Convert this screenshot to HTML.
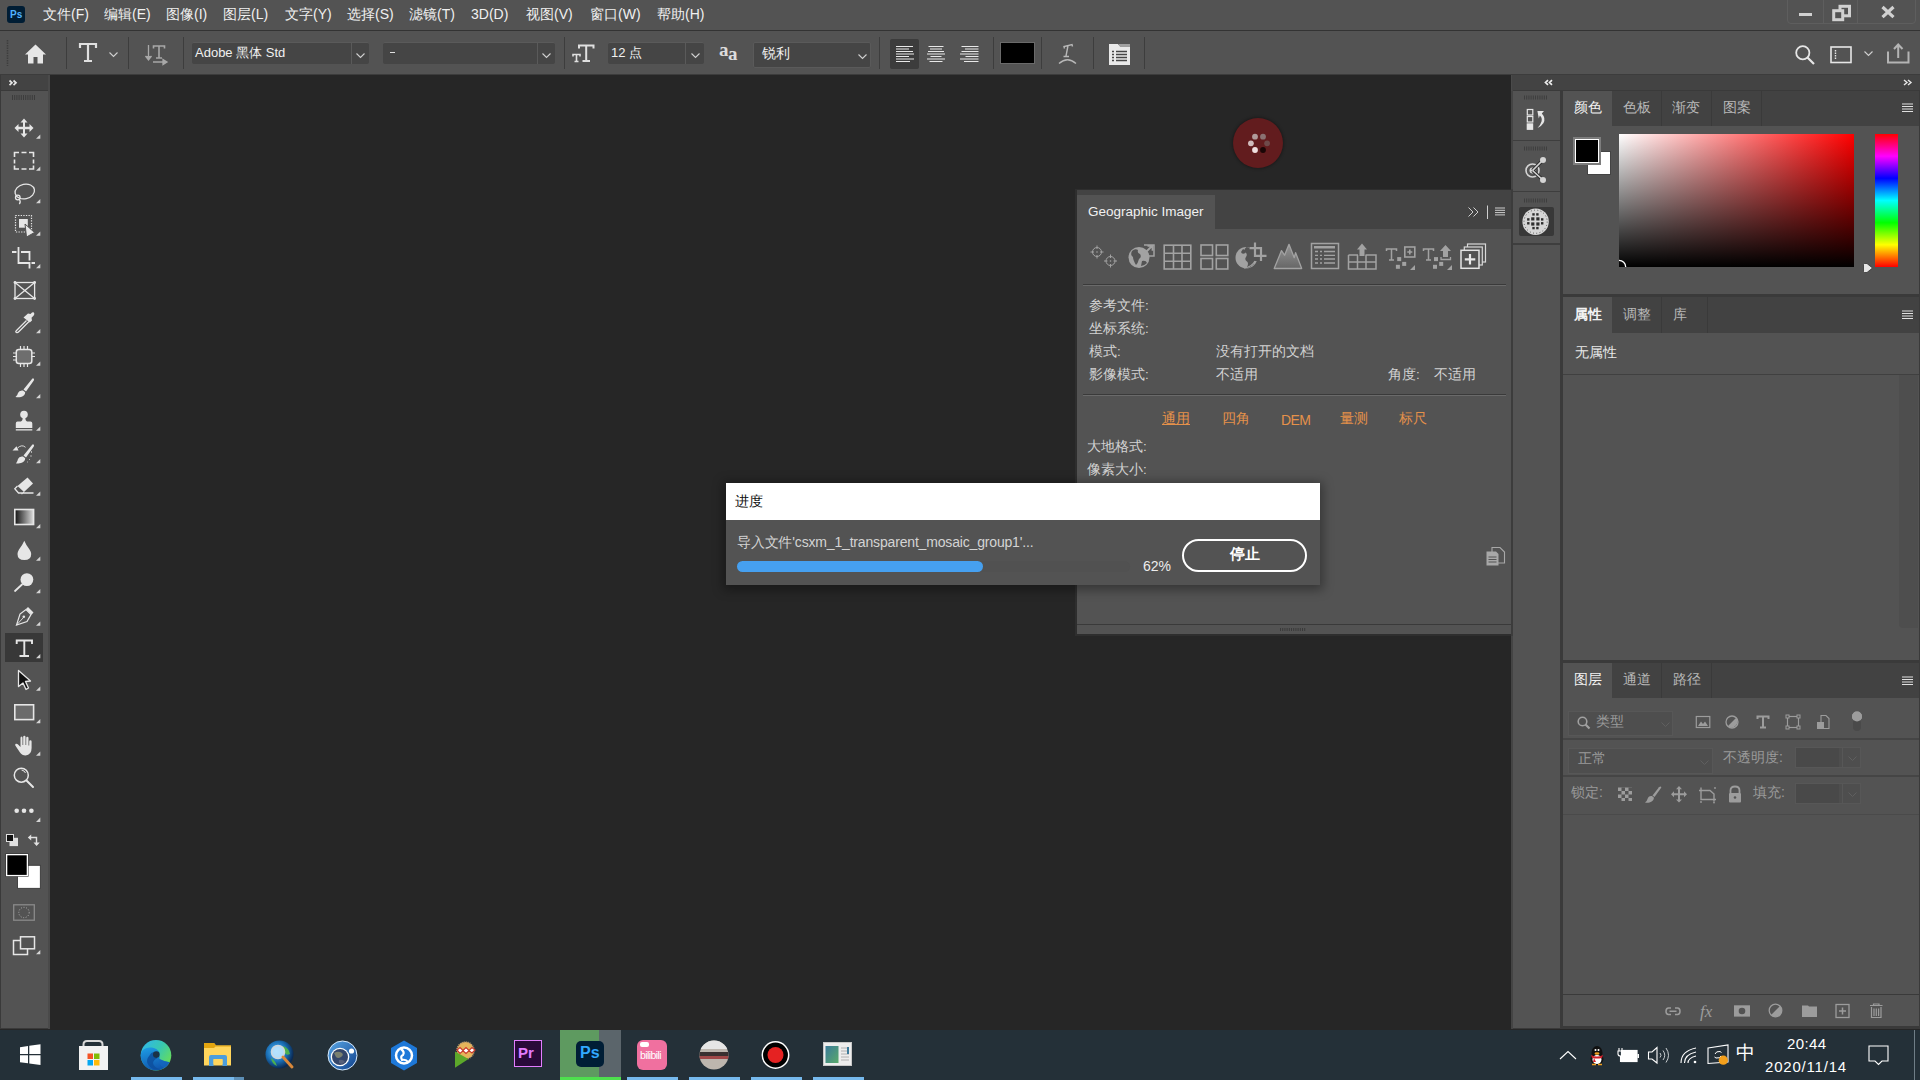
<!DOCTYPE html>
<html><head><meta charset="utf-8">
<style>
*{box-sizing:border-box;margin:0;padding:0}
html,body{width:1920px;height:1080px;overflow:hidden;background:#262626;font-family:"Liberation Sans",sans-serif;color:#e8e8e8}
.a{position:absolute}
svg{position:absolute;overflow:visible}
.t{position:absolute;white-space:nowrap;line-height:1}
</style></head><body>

<!-- MENU BAR -->
<div class="a" id="menubar" style="left:0;top:0;width:1920px;height:30px;background:#535353"></div>
<div class="a" style="left:0;top:30px;width:1920px;height:1px;background:#333"></div>
<div class="a" style="left:7px;top:6px;width:18px;height:17px;background:#001d34;border-radius:3px"></div>
<div class="t" style="left:10px;top:10px;font-size:10px;font-weight:bold;color:#50b2ff">Ps</div>
<div class="t" style="left:43px;top:7px;font-size:14px;color:#f0f0f0">文件(F)</div>
<div class="t" style="left:104px;top:7px;font-size:14px;color:#f0f0f0">编辑(E)</div>
<div class="t" style="left:166px;top:7px;font-size:14px;color:#f0f0f0">图像(I)</div>
<div class="t" style="left:223px;top:7px;font-size:14px;color:#f0f0f0">图层(L)</div>
<div class="t" style="left:285px;top:7px;font-size:14px;color:#f0f0f0">文字(Y)</div>
<div class="t" style="left:347px;top:7px;font-size:14px;color:#f0f0f0">选择(S)</div>
<div class="t" style="left:409px;top:7px;font-size:14px;color:#f0f0f0">滤镜(T)</div>
<div class="t" style="left:471px;top:7px;font-size:14px;color:#f0f0f0">3D(D)</div>
<div class="t" style="left:526px;top:7px;font-size:14px;color:#f0f0f0">视图(V)</div>
<div class="t" style="left:590px;top:7px;font-size:14px;color:#f0f0f0">窗口(W)</div>
<div class="t" style="left:657px;top:7px;font-size:14px;color:#f0f0f0">帮助(H)</div>
<!-- window controls -->
<div class="a" style="left:1787px;top:-4px;width:129px;height:28px;border:1px solid #5e5e5e;border-radius:4px"></div>
<div class="a" style="left:1823px;top:0;width:1px;height:23px;background:#5e5e5e"></div>
<div class="a" style="left:1857px;top:0;width:1px;height:23px;background:#5e5e5e"></div>
<div class="a" style="left:1799px;top:13px;width:13px;height:3.3px;background:#d0d0d0"></div>
<svg style="left:1830px;top:3px" width="24" height="20"><rect x="10" y="3.3" width="9.5" height="9.5" fill="none" stroke="#d0d0d0" stroke-width="3"/><rect x="3.7" y="7.7" width="9" height="9" fill="#535353" stroke="#d0d0d0" stroke-width="3"/></svg>
<svg style="left:1880px;top:5px" width="16" height="14"><path d="M2.5 2L13.5 12.2M13.5 2L2.5 12.2" stroke="#d0d0d0" stroke-width="3.2"/></svg>

<!-- OPTIONS BAR -->
<div class="a" id="optbar" style="left:0;top:31px;width:1920px;height:43px;background:#535353"></div>
<div class="a" style="left:0;top:74px;width:1920px;height:1px;background:#3c3c3c"></div>
<!-- grip -->
<svg style="left:6px;top:40px" width="3" height="26"><path d="M1.5 0V26" stroke="#3e3e3e" stroke-width="1.5" stroke-dasharray="1.5 1"/></svg>
<!-- separators -->
<div class="a" style="left:66px;top:37px;width:1px;height:32px;background:#3d3d3d"></div>
<div class="a" style="left:128px;top:37px;width:1px;height:32px;background:#3d3d3d"></div>
<div class="a" style="left:183px;top:37px;width:1px;height:32px;background:#3d3d3d"></div>
<div class="a" style="left:564px;top:37px;width:1px;height:32px;background:#3d3d3d"></div>
<div class="a" style="left:879px;top:37px;width:1px;height:32px;background:#3d3d3d"></div>
<div class="a" style="left:993px;top:37px;width:1px;height:32px;background:#3d3d3d"></div>
<div class="a" style="left:1041px;top:37px;width:1px;height:32px;background:#3d3d3d"></div>
<div class="a" style="left:1093px;top:37px;width:1px;height:32px;background:#3d3d3d"></div>
<div class="a" style="left:1144px;top:37px;width:1px;height:32px;background:#3d3d3d"></div>
<!-- home -->
<svg style="left:25px;top:44px" width="22" height="20"><path d="M10.5 0.5L21 10.5H18V19.5H12.5V13H8.5V19.5H3V10.5H0Z" fill="#e6e6e6"/></svg>
<!-- T tool -->
<svg style="left:79px;top:43px" width="18" height="20"><path d="M1 5V1H17V5M9 1V18M5 18H13" fill="none" stroke="#e0e0e0" stroke-width="2.2"/></svg>
<svg style="left:109px;top:52px" width="9" height="6"><path d="M0.5 0.5L4.5 4.5L8.5 0.5" fill="none" stroke="#d0d0d0" stroke-width="1.1"/></svg>
<!-- IT orient -->
<svg style="left:145px;top:45px" width="24" height="20"><path d="M3.5 0V14M0.5 11L3.5 15L6.5 11" fill="#a8a8a8" stroke="#a8a8a8" stroke-width="1.3"/><path d="M8.5 3.5V1H19.5V3.5M14 1V13M11 13H17" fill="none" stroke="#a8a8a8" stroke-width="1.6"/><path d="M8 17H21M18 14.5L22 17L18 19.5Z" fill="#a8a8a8" stroke="#a8a8a8" stroke-width="1.3"/></svg>
<!-- font family box -->
<div class="a" style="left:192px;top:42px;width:177px;height:22px;background:#454545;border-top:1px solid #5a5a5a;border-radius:2px"></div>
<div class="a" style="left:351px;top:43px;width:1px;height:21px;background:#5a5a5a"></div>
<div class="t" style="left:195px;top:46px;font-size:13px;color:#f0f0f0">Adobe 黑体 Std</div>
<svg style="left:356px;top:53px" width="9" height="6"><path d="M0.5 0.5L4.5 4.5L8.5 0.5" fill="none" stroke="#d0d0d0" stroke-width="1.1"/></svg>
<!-- font style box -->
<div class="a" style="left:383px;top:42px;width:172px;height:22px;background:#454545;border-top:1px solid #5a5a5a;border-radius:2px"></div>
<div class="a" style="left:537px;top:43px;width:1px;height:21px;background:#5a5a5a"></div>
<div class="a" style="left:390px;top:52px;width:5px;height:1px;background:#e0e0e0"></div>
<svg style="left:542px;top:53px" width="9" height="6"><path d="M0.5 0.5L4.5 4.5L8.5 0.5" fill="none" stroke="#d0d0d0" stroke-width="1.1"/></svg>
<!-- size icon -->
<svg style="left:572px;top:44px" width="24" height="20"><path d="M1 12.5V10.5H8V12.5M4.5 10.5V17.5M2.5 17.5H6.5" fill="none" stroke="#e0e0e0" stroke-width="1.6"/><path d="M7 4.5V1.5H21.5V4.5M14.2 1.5V17M10.5 17H18" fill="none" stroke="#e0e0e0" stroke-width="2"/></svg>
<!-- size box -->
<div class="a" style="left:608px;top:42px;width:96px;height:22px;background:#454545;border-top:1px solid #5a5a5a;border-radius:2px"></div>
<div class="a" style="left:685px;top:43px;width:1px;height:21px;background:#5a5a5a"></div>
<div class="t" style="left:611px;top:46px;font-size:13px;color:#f0f0f0">12 点</div>
<svg style="left:691px;top:53px" width="9" height="6"><path d="M0.5 0.5L4.5 4.5L8.5 0.5" fill="none" stroke="#d0d0d0" stroke-width="1.1"/></svg>
<!-- aa -->
<svg style="left:700px;top:36px" width="50" height="34"><text x="19" y="20.1" font-family="Liberation Serif" font-weight="bold" font-size="19" fill="#dcdcdc">a</text><text x="28" y="24.2" font-family="Liberation Serif" font-weight="bold" font-size="19" fill="#dcdcdc">a</text></svg>
<!-- antialias box -->
<div class="a" style="left:753px;top:42px;width:118px;height:26px;background:#454545;border:1px solid #5a5a5a;border-radius:2px"></div>
<div class="t" style="left:762px;top:46px;font-size:14px;color:#f0f0f0">锐利</div>
<svg style="left:858px;top:54px" width="9" height="6"><path d="M0.5 0.5L4.5 4.5L8.5 0.5" fill="none" stroke="#d0d0d0" stroke-width="1.1"/></svg>
<!-- align -->
<div class="a" style="left:890px;top:39px;width:29px;height:30px;background:#3c3c3c;border-radius:2px"></div>
<svg style="left:896px;top:45px" width="20" height="19"><path d="M0 1.5H17M0 4H13M0 6.5H17M0 9H18M0 11.5H13M0 14H18M0 16.5H14" stroke="#e8e8e8" stroke-width="1.2"/></svg>
<svg style="left:927px;top:45px" width="20" height="19"><path d="M1.5 1.5H16.5M3 4H15M1 6.5H17M0 9H18M3.5 11.5H14.5M0 14H18M2.5 16.5H15.5" stroke="#e8e8e8" stroke-width="1.2"/></svg>
<svg style="left:960px;top:45px" width="20" height="19"><path d="M1.5 1.5H18.5M5 4H18.5M1.5 6.5H18.5M0 9H18.5M5.5 11.5H18.5M0 14H18.5M4 16.5H18.5" stroke="#e8e8e8" stroke-width="1.2"/></svg>
<!-- color swatch -->
<div class="a" style="left:1000px;top:42px;width:35px;height:22px;background:#000;border:1px solid #6a6a6a"></div>
<!-- warp -->
<svg style="left:1058px;top:43px" width="19" height="22"><path d="M6.5 5.5L6 3.5L14 1.5L14.5 3.5M10 2.5L8 13M5.5 13.5H11" fill="none" stroke="#b8b8b8" stroke-width="1.4"/><path d="M1 20.5Q9.5 13 18 20.5" fill="none" stroke="#b8b8b8" stroke-width="1.4"/></svg>
<!-- panels icon -->
<svg style="left:1109px;top:44px" width="22" height="21"><path d="M0 0H9L11 2.5H21V21H0Z" fill="#e8e8e8"/><rect x="10" y="0" width="11" height="2" fill="#a0a0a0"/><path d="M3 7.5H5M7 7.5H18M3 10.5H5M7 10.5H18M3 13.5H5M7 13.5H18M3 16.5H5M7 16.5H18" stroke="#454545" stroke-width="1.3"/></svg>
<!-- right icons -->
<svg style="left:1795px;top:45px" width="21" height="20"><circle cx="7.8" cy="7.8" r="6.6" fill="none" stroke="#e6e6e6" stroke-width="1.8"/><path d="M12.5 12.5L19 19" stroke="#e6e6e6" stroke-width="2.2"/></svg>
<svg style="left:1830px;top:46px" width="22" height="18"><rect x="1" y="1" width="20" height="15.5" fill="none" stroke="#e6e6e6" stroke-width="1.6"/><path d="M5.5 4V13" stroke="#e6e6e6" stroke-width="1.4" stroke-dasharray="1.5 1"/></svg>
<svg style="left:1864px;top:51px" width="9" height="6"><path d="M0.5 0.5L4.5 4.5L8.5 0.5" fill="none" stroke="#d0d0d0" stroke-width="1.1"/></svg>
<svg style="left:1887px;top:43px" width="23" height="21"><path d="M1 8.5V19.5H21.5V8.5" fill="none" stroke="#b4b4b4" stroke-width="2"/><path d="M11.2 15V2M7 6L11.2 1.5L15.5 6" fill="none" stroke="#b4b4b4" stroke-width="2"/></svg>

<!-- TOOLBAR -->
<div class="a" style="left:0;top:75px;width:50px;height:954px;background:#3a3a3a"></div>
<div class="a" style="left:48px;top:75px;width:2px;height:954px;background:#4a4a4a"></div>
<div class="a" style="left:1px;top:75px;width:47px;height:15px;background:#434343"></div>
<div class="a" style="left:1px;top:91px;width:47px;height:937px;background:#535353"></div>
<svg style="left:0;top:0" width="50" height="1029" id="tools">
<g fill="none" stroke="#e6e6e6" stroke-width="1.6">
<!-- header >> -->
<path d="M9.5 80.5L12 82.8L9.5 85.1M13.5 80.5L16 82.8L13.5 85.1" stroke-width="1.7"/>
</g>
<!-- grip -->
<path d="M12 97.5H36" stroke="#3c3c3c" stroke-width="5" stroke-dasharray="1 1.2"/>
<!-- corner triangles -->
<g fill="#d4d4d4">
<path d="M40.3 134.5V138.8H36Z"/><path d="M40.3 166.5V170.8H36Z"/><path d="M40.3 199V203.3H36Z"/><path d="M40.3 231.5V235.8H36Z"/><path d="M40.3 264V268.3H36Z"/>
<path d="M40.3 329V333.3H36Z"/><path d="M40.3 361.5V365.8H36Z"/><path d="M40.3 394V398.3H36Z"/><path d="M40.3 426.5V430.8H36Z"/><path d="M40.3 459V463.3H36Z"/><path d="M40.3 491.5V495.8H36Z"/><path d="M40.3 524V528.3H36Z"/><path d="M40.3 556.5V560.8H36Z"/><path d="M40.3 589V593.3H36Z"/><path d="M40.3 621.5V625.8H36Z"/>
<path d="M40.3 654V658.3H36Z"/><path d="M40.3 686.5V690.8H36Z"/><path d="M40.3 719V723.3H36Z"/><path d="M40.3 751.5V755.8H36Z"/><path d="M40.3 817.5V822H36Z"/>
<path d="M40.3 950V954.3H36Z"/>
</g>
<!-- move -->
<g fill="#e6e6e6"><path d="M24 118.5L27.5 122.5H25V126.8H29.5V124L33.5 128L29.5 132V129.2H25V133.5H27.5L24 137.5L20.5 133.5H23V129.2H18.5V132L14.5 128L18.5 124V126.8H23V122.5H20.5Z"/></g>
<!-- marquee -->
<path d="M14.5 157V152.5H19M21.5 152.5H26.5M29 152.5H33.5V157M33.5 159.5V163.5M33.5 165.5V169H29M26.5 169H21.5M19 169H14.5V165.5M14.5 163.5V159.5" fill="none" stroke="#e6e6e6" stroke-width="1.6"/>
<!-- lasso -->
<g fill="none" stroke="#e6e6e6" stroke-width="1.3"><ellipse cx="24.8" cy="191.5" rx="9.8" ry="7.3" transform="rotate(-12 24.8 191.5)"/><circle cx="17.8" cy="197.5" r="2.3"/><path d="M19.5 199.5Q21 202 19.3 204"/></g>
<!-- quick select -->
<rect x="15.5" y="215.5" width="16" height="16.5" fill="none" stroke="#e6e6e6" stroke-width="1.2" stroke-dasharray="1.3 1.3"/>
<rect x="19" y="219" width="8.8" height="8.7" fill="#e6e6e6"/>
<path d="M25 224L34.5 232.5L26.5 237Z" fill="#e6e6e6" stroke="#535353" stroke-width="1"/>
<!-- crop -->
<path d="M12 252H16.5M18.5 247V263H29.5V268.5M21 252H29.5V260.5M31.5 263H35" fill="none" stroke="#e6e6e6" stroke-width="1.8"/>
<!-- frame -->
<g fill="none" stroke="#e6e6e6" stroke-width="1.3"><rect x="15" y="282.5" width="19.6" height="16"/><path d="M15 282.5L34.6 298.5M34.6 282.5L15 298.5"/></g>
<g fill="#e6e6e6"><circle cx="15" cy="282.5" r="1.4"/><circle cx="34.6" cy="282.5" r="1.4"/><circle cx="15" cy="298.5" r="1.4"/><circle cx="34.6" cy="298.5" r="1.4"/></g>
<!-- eyedropper -->
<path d="M26.5 320.5L16.5 330.5Q15 332 16.5 332.5Q17.5 333 19 331.5L29 321.5" fill="none" stroke="#e6e6e6" stroke-width="1.3"/>
<path d="M23.5 317.5L28 313.5L30.5 314L32 312.5Q34 311.8 34.3 313.5Q34.5 315 33 316.3L31.5 317.8L32 320.5L29.8 322.5Z" fill="#e6e6e6"/>
<!-- healing -->
<rect x="16.3" y="349.5" width="15.5" height="14" rx="2.5" fill="#6e6e6e" stroke="#e6e6e6" stroke-width="1.5"/>
<path d="M20.5 346V349.5M24 346V349.5M27.5 346V349.5M20.5 363.5V367M24 363.5V367M27.5 363.5V367M13 353H16.3M13 356.5H16.3M13 360H16.3M31.8 353H35M31.8 356.5H35" stroke="#e6e6e6" stroke-width="1.2"/>
<!-- brush -->
<path d="M33.5 378.5Q34.5 379 33.8 380.5L26 391.5L23.5 389.5L32 379Q32.8 378 33.5 378.5Z" fill="#e6e6e6"/>
<path d="M23 390.5L25.2 392.3Q25 396 21 397Q18 397.5 15.5 397Q17.5 395.5 18 393Q19 390 23 390.5Z" fill="#e6e6e6"/>
<!-- stamp -->
<circle cx="24" cy="414.5" r="3.8" fill="#e6e6e6"/>
<path d="M22.5 417H25.5Q25 420.5 27 421.5H30.5Q32.3 421.5 32.3 423.5V428H15.8V423.5Q15.8 421.5 17.5 421.5H21Q23 420.5 22.5 417Z" fill="#e6e6e6"/>
<rect x="15.8" y="429.2" width="16.5" height="1.3" fill="#e6e6e6"/>
<!-- history brush -->
<path d="M33.5 444.5Q34.5 445 33.8 446.5L26 457.5L23.5 455.5L32 445Q32.8 444 33.5 444.5Z" fill="#e6e6e6"/>
<path d="M23 456.5L25.2 458.3Q25 462 21 463Q18 463.5 16 463.5Q17.5 461.5 18 459Q19 456 23 456.5Z" fill="#e6e6e6"/>
<path d="M12.5 450.5L16.5 446.3L18.5 450.5Z" fill="#e6e6e6"/><path d="M17.5 448Q22 444 25.5 447.3" fill="none" stroke="#e6e6e6" stroke-width="0.9"/>
<path d="M31.5 451V453M31 455V457M29.5 459V460M27.5 461.5V462.5" stroke="#c8c8c8" stroke-width="0.8"/>
<!-- eraser -->
<path d="M27.5 477.5L33 483.5L24 492L17.5 486Z" fill="#e6e6e6"/>
<path d="M17.5 486L14.8 488.8L18.5 493H33.5M24 492L21.5 494" fill="none" stroke="#e6e6e6" stroke-width="1.3"/>
<!-- gradient -->
<defs><linearGradient id="gr"><stop offset="0" stop-color="#111"/><stop offset="1" stop-color="#ddd"/></linearGradient></defs>
<rect x="14.8" y="509.5" width="18.8" height="15" fill="url(#gr)" stroke="#e6e6e6" stroke-width="1.6"/>
<!-- blur drop -->
<path d="M24.3 540.8Q26 545 29.5 549.5Q31.2 552 31.2 554Q31.2 560 24.3 560Q17.5 560 17.5 554Q17.5 552 19 549.5Q22.5 545 24.3 540.8Z" fill="#e6e6e6"/>
<!-- dodge -->
<circle cx="26.9" cy="579.6" r="6.4" fill="#e6e6e6"/>
<path d="M22 584.5L15 591" stroke="#e6e6e6" stroke-width="1.8" stroke-linecap="round"/>
<!-- pen -->
<path d="M28 607L33.5 612.5L31.5 614.8L26 609Z" fill="#e6e6e6"/>
<path d="M26 609.5L31 614.5L27 621.5L16.5 625L20 614Z" fill="none" stroke="#e6e6e6" stroke-width="1.2"/>
<path d="M16.5 625L23.5 617.5" stroke="#e6e6e6" stroke-width="0.9"/><circle cx="23.8" cy="616.8" r="1.3" fill="#e6e6e6"/>
</svg>
<!-- T active -->
<div class="a" style="left:5px;top:633px;width:38px;height:29px;background:#383838"></div>
<svg style="left:0;top:0" width="50" height="1029">
<path d="M16.7 644V640.5H32V644M24.3 640.5V656M19.5 656H29" fill="none" stroke="#e6e6e6" stroke-width="1.9"/>
<path d="M40.3 654V658.3H36Z" fill="#d4d4d4"/>
<!-- path select -->
<path d="M18.5 670.5L30.5 681L25.5 681.5L28.5 688L26 689.5L23 683L18.5 686.5Z" fill="#111" stroke="#e6e6e6" stroke-width="1.3" stroke-linejoin="round"/>
<!-- rectangle -->
<rect x="14.8" y="704.8" width="18.8" height="14.8" fill="#6b6b6b" stroke="#e6e6e6" stroke-width="1.6"/>
<!-- hand -->
<path d="M20.5 738Q20.5 736.5 21.5 736.5Q22.5 736.5 22.5 738V745H23.2V737Q23.2 735.8 24.3 735.8Q25.5 735.8 25.5 737V745H26.2V738Q26.2 736.8 27.3 736.8Q28.5 736.8 28.5 738V745.5H29.2V741.5Q29.2 740.2 30.4 740.2Q31.6 740.2 31.6 741.5V748Q31.6 755 25.5 755.5Q22 755.5 20 752.5L15.3 745.5Q14.8 744.3 15.8 743.8Q16.8 743.3 17.8 744.3L20.5 747Z" fill="#e6e6e6"/>
<!-- zoom -->
<circle cx="21.3" cy="775.2" r="7" fill="none" stroke="#e6e6e6" stroke-width="1.5"/>
<path d="M21.5 770Q24.5 770.5 25.5 773" fill="none" stroke="#e6e6e6" stroke-width="1"/>
<path d="M26.5 780.5L33 787" stroke="#e6e6e6" stroke-width="2" stroke-linecap="round"/>
<!-- dots -->
<g fill="#e6e6e6"><circle cx="16.7" cy="810.8" r="2.3"/><circle cx="24" cy="810.8" r="2.3"/><circle cx="31.4" cy="810.8" r="2.3"/></g>
<!-- default colors -->
<rect x="9.5" y="837.8" width="8.5" height="8.3" fill="#e0e0e0"/>
<rect x="6.5" y="834.5" width="7" height="7" fill="#111" stroke="#e0e0e0" stroke-width="1"/>
<!-- swap -->
<path d="M31 837.5H36.5V843" fill="none" stroke="#e0e0e0" stroke-width="1.4"/>
<path d="M27.8 837.5L31.2 834.5V840.5Z M33.5 842.5H39.8L36.6 846Z" fill="#e0e0e0"/>
<!-- fg/bg -->
<rect x="17.6" y="865.3" width="22.7" height="23" fill="#fff" stroke="#2e2e2e" stroke-width="0.8"/>
<rect x="5.5" y="853.5" width="23" height="23.2" fill="#2e2e2e"/>
<rect x="6" y="854" width="22" height="22.2" fill="#fff"/>
<rect x="7.3" y="855.3" width="19.4" height="19.6" fill="#000"/>
<!-- quick mask -->
<rect x="13.7" y="904.8" width="20.6" height="15.4" fill="none" stroke="#8a8a8a" stroke-width="1.3"/>
<circle cx="24" cy="912.5" r="5.2" fill="none" stroke="#b0b0b0" stroke-width="1" stroke-dasharray="1 1.6"/>
<!-- screen mode -->
<rect x="13.5" y="940.5" width="14" height="14" fill="none" stroke="#e6e6e6" stroke-width="1.5"/>
<rect x="20.5" y="936.8" width="14" height="12" fill="#535353" stroke="#e6e6e6" stroke-width="1.5"/>
</svg>

<!-- RIGHT PANEL AREA -->
<div class="a" style="left:1511px;top:75px;width:409px;height:954px;background:#3a3a3a"></div>
<div class="a" style="left:1511px;top:75px;width:2px;height:954px;background:#444"></div>
<div class="a" style="left:1511px;top:75px;width:1px;height:16px;background:#4a4a4a"></div>
<div class="a" style="left:1512px;top:75px;width:408px;height:15px;background:#434343"></div>
<div class="a" style="left:1513px;top:91px;width:47px;height:937px;background:#535353"></div>
<div class="a" style="left:1563px;top:91px;width:356px;height:937px;background:#535353"></div>
<!-- strip groups borders -->
<div class="a" style="left:1513px;top:140px;width:47px;height:1px;background:#3e3e3e"></div>
<div class="a" style="left:1513px;top:191px;width:47px;height:1px;background:#3e3e3e"></div>
<div class="a" style="left:1513px;top:243px;width:47px;height:2px;background:#3e3e3e"></div>
<svg style="left:1508px;top:74px" width="60" height="180">
<path d="M40 6.2L37.5 8.5L40 10.8M44 6.2L41.5 8.5L44 10.8" fill="none" stroke="#ececec" stroke-width="1.7"/>
<path d="M16 23.5H40M16 74.5H40M16 126.5H40" stroke="#3e3e3e" stroke-width="4" stroke-dasharray="1 1.2"/>
<!-- history -->
<rect x="19.3" y="35.5" width="5.5" height="5.5" fill="none" stroke="#e6e6e6" stroke-width="1.2"/>
<rect x="19.3" y="42.5" width="5.5" height="5.5" fill="none" stroke="#e6e6e6" stroke-width="1.2"/>
<rect x="18.7" y="49.3" width="6.5" height="6.6" fill="#e6e6e6"/>
<path d="M29.4 37L36 37L33.8 39.5Q38 44 35.5 49Q33 53 29.5 54Q32.5 51 33.5 47.5Q34.5 43.5 31.8 41.5L30.8 44.5Z" fill="#e6e6e6"/>
<!-- icon2 -->
<circle cx="24.5" cy="96.5" r="6.5" fill="none" stroke="#d4d4d4" stroke-width="1.6"/>
<circle cx="24.5" cy="96.5" r="3" fill="#d4d4d4"/>
<path d="M24.5 96.5L35 86M24.5 96.5L35 106" stroke="#2e2e2e" stroke-width="3.5"/>
<path d="M24.5 96.5L35 86M24.5 96.5L35 106" stroke="#d4d4d4" stroke-width="1.6"/>
<circle cx="35" cy="86" r="3" fill="#d4d4d4"/><circle cx="35" cy="106" r="3" fill="#d4d4d4"/>
</svg>
<div class="a" style="left:1519px;top:207px;width:35px;height:29px;background:#383838;border-radius:2px"></div>
<svg style="left:1519px;top:207px" width="35" height="29">
<circle cx="16.6" cy="14.7" r="13.2" fill="#d6d6d6"/>
<circle cx="16.6" cy="14.7" r="11.6" fill="none" stroke="#4a4a4a" stroke-width="1" stroke-dasharray="0.9 2.4"/>
<g fill="#2e2e2e">
<rect x="12.2" y="10.3" width="3.2" height="3.2"/><rect x="17.3" y="10.3" width="3.2" height="3.2"/><rect x="12.2" y="15.4" width="3.2" height="3.2"/><rect x="17.3" y="15.4" width="3.2" height="3.2"/>
<rect x="13.3" y="6.2" width="2.4" height="2.4"/><rect x="17.2" y="6.2" width="2.4" height="2.4"/><rect x="8.1" y="11.2" width="2.4" height="2.4"/><rect x="22" y="11.2" width="2.4" height="2.4"/>
<rect x="8.1" y="15.1" width="2.4" height="2.4"/><rect x="22" y="15.1" width="2.4" height="2.4"/><rect x="13.3" y="19.9" width="2.4" height="2.4"/><rect x="17.2" y="19.9" width="2.4" height="2.4"/>
</g>
</svg>

<!-- COLOR PANEL -->
<div class="a" style="left:1563px;top:91px;width:356px;height:35px;background:#424242"></div>
<div class="a" style="left:1563px;top:91px;width:49px;height:35px;background:#535353"></div>
<div class="a" style="left:1661px;top:91px;width:1px;height:35px;background:#3a3a3a"></div>
<div class="a" style="left:1711px;top:91px;width:1px;height:35px;background:#3a3a3a"></div>
<div class="a" style="left:1761px;top:91px;width:1px;height:35px;background:#3a3a3a"></div>
<div class="t" style="left:1574px;top:100px;font-size:14px;color:#f2f2f2">颜色</div>
<div class="t" style="left:1623px;top:100px;font-size:14px;color:#b8b8b8">色板</div>
<div class="t" style="left:1672px;top:100px;font-size:14px;color:#b8b8b8">渐变</div>
<div class="t" style="left:1723px;top:100px;font-size:14px;color:#b8b8b8">图案</div>
<svg style="left:1902px;top:103px" width="12" height="10"><path d="M0 1H11M0 3.5H11M0 6H11M0 8.5H11" stroke="#e0e0e0" stroke-width="1"/></svg>
<!-- swatches -->
<div class="a" style="left:1587px;top:151px;width:24px;height:24px;background:#fff;border:1px solid #444"></div>
<div class="a" style="left:1573px;top:137px;width:28px;height:28px;background:#000;border:2px solid #7d7d7d;box-shadow:inset 0 0 0 1px #fff, inset 0 0 0 2px #000"></div>
<!-- color field -->
<div class="a" style="left:1619px;top:134px;width:235px;height:133px;background:linear-gradient(to bottom,rgba(0,0,0,0),#000),linear-gradient(to right,#fff,#f00)"></div>
<svg style="left:1612px;top:255px" width="20" height="14"><path d="M7 5.3A6.7 6.7 0 0 1 13.7 12" fill="none" stroke="#fff" stroke-width="1.3"/></svg>
<!-- hue -->
<div class="a" style="left:1875px;top:134px;width:23px;height:133px;background:linear-gradient(to bottom,#f00 0%,#f0f 16.7%,#00f 33.3%,#0ff 50%,#0f0 66.7%,#ff0 83.3%,#f00 100%)"></div>
<svg style="left:1862px;top:262px" width="12" height="12"><path d="M2.5 1.5H5L10.5 6L5 10.5H2.5Q1.5 10.5 1.5 9.5V2.5Q1.5 1.5 2.5 1.5Z" fill="#e6e6e6" stroke="#333" stroke-width="0.8" stroke-linejoin="round"/></svg>
<div class="a" style="left:1563px;top:294px;width:356px;height:3px;background:#3a3a3a"></div>

<!-- PROPERTIES PANEL -->
<div class="a" style="left:1563px;top:297px;width:356px;height:36px;background:#424242"></div>
<div class="a" style="left:1563px;top:297px;width:49px;height:36px;background:#535353"></div>
<div class="a" style="left:1661px;top:297px;width:1px;height:36px;background:#3a3a3a"></div>
<div class="a" style="left:1707px;top:297px;width:1px;height:36px;background:#3a3a3a"></div>
<div class="t" style="left:1574px;top:307px;font-size:14px;color:#f2f2f2;font-weight:bold">属性</div>
<div class="t" style="left:1623px;top:307px;font-size:14px;color:#b8b8b8">调整</div>
<div class="t" style="left:1673px;top:307px;font-size:14px;color:#b8b8b8">库</div>
<svg style="left:1902px;top:310px" width="12" height="10"><path d="M0 1H11M0 3.5H11M0 6H11M0 8.5H11" stroke="#e0e0e0" stroke-width="1"/></svg>
<div class="t" style="left:1575px;top:345px;font-size:14px;color:#e8e8e8">无属性</div>
<div class="a" style="left:1563px;top:374px;width:356px;height:1px;background:#404040"></div>
<div class="a" style="left:1899px;top:375px;width:19px;height:253px;background:#4e4e4e;border-radius:0 0 0 4px"></div>
<div class="a" style="left:1563px;top:660px;width:356px;height:3px;background:#3a3a3a"></div>

<!-- LAYERS PANEL -->
<div class="a" style="left:1563px;top:663px;width:356px;height:35px;background:#424242"></div>
<div class="a" style="left:1563px;top:663px;width:49px;height:35px;background:#535353"></div>
<div class="a" style="left:1661px;top:663px;width:1px;height:35px;background:#3a3a3a"></div>
<div class="a" style="left:1711px;top:663px;width:1px;height:35px;background:#3a3a3a"></div>
<div class="t" style="left:1574px;top:672px;font-size:14px;color:#f2f2f2">图层</div>
<div class="t" style="left:1623px;top:672px;font-size:14px;color:#b8b8b8">通道</div>
<div class="t" style="left:1673px;top:672px;font-size:14px;color:#b8b8b8">路径</div>
<svg style="left:1902px;top:676px" width="12" height="10"><path d="M0 1H11M0 3.5H11M0 6H11M0 8.5H11" stroke="#e0e0e0" stroke-width="1"/></svg>
<!-- filter row -->
<div class="a" style="left:1568px;top:711px;width:105px;height:25px;background:#4e4e4e;border:1px solid #575757"></div>
<svg style="left:1577px;top:716px" width="14" height="14"><circle cx="5.5" cy="5.5" r="4.3" fill="none" stroke="#a0a0a0" stroke-width="1.6"/><path d="M8.5 8.5L12.5 12.5" stroke="#a0a0a0" stroke-width="2.2"/></svg>
<div class="t" style="left:1596px;top:714px;font-size:14px;color:#9a9a9a">类型</div>
<svg style="left:1661px;top:722px" width="9" height="6"><path d="M0.5 0.5L4.5 4.5L8.5 0.5" fill="none" stroke="#5f5f5f" stroke-width="1"/></svg>
<svg style="left:1690px;top:712px" width="180" height="22" fill="#9c9c9c">
<rect x="6.3" y="4.5" width="13.5" height="11" fill="none" stroke="#9c9c9c" stroke-width="1.2"/><path d="M8 14L11 9.5L13 12L15 9.5L18 14Z"/>
<circle cx="42" cy="10" r="6" fill="none" stroke="#9c9c9c" stroke-width="1.3"/><path d="M46.2 5.8A6 6 0 0 1 37.8 14.2Z"/>
<path d="M67.5 7V4.5H78.5V7M73 4.5V15.5M70 15.5H76" fill="none" stroke="#9c9c9c" stroke-width="2"/>
<rect x="97.5" y="4.5" width="11" height="11" fill="none" stroke="#9c9c9c" stroke-width="1.2"/><rect x="96" y="3" width="3" height="3" fill="#535353" stroke="#9c9c9c" stroke-width="1"/><rect x="107" y="3" width="3" height="3" fill="#535353" stroke="#9c9c9c" stroke-width="1"/><rect x="96" y="14" width="3" height="3" fill="#535353" stroke="#9c9c9c" stroke-width="1"/><rect x="107" y="14" width="3" height="3" fill="#535353" stroke="#9c9c9c" stroke-width="1"/>
<path d="M131 3.5H136L139 6.5V16.5H131Z" fill="none" stroke="#9c9c9c" stroke-width="1.1"/><rect x="127" y="10" width="7" height="7"/>
<circle cx="167" cy="4.5" r="5"/><rect x="163" y="7" width="8" height="12" rx="4" fill="#4a4a4a"/><circle cx="167" cy="4.5" r="5"/>
</svg>
<div class="a" style="left:1563px;top:738px;width:356px;height:2px;background:#454545"></div>
<!-- blend row -->
<div class="a" style="left:1568px;top:748px;width:145px;height:26px;background:#4e4e4e;border:1px solid #575757"></div>
<div class="t" style="left:1578px;top:751px;font-size:14px;color:#9a9a9a">正常</div>
<svg style="left:1700px;top:760px" width="9" height="6"><path d="M0.5 0.5L4.5 4.5L8.5 0.5" fill="none" stroke="#5f5f5f" stroke-width="1"/></svg>
<div class="t" style="left:1723px;top:750px;font-size:14px;color:#9a9a9a">不透明度:</div>
<div class="a" style="left:1795px;top:747px;width:66px;height:21px;background:#4e4e4e;border:1px solid #575757"></div>
<div class="a" style="left:1796px;top:748px;width:43px;height:19px;background:#494949"></div>
<div class="a" style="left:1842px;top:748px;width:1px;height:19px;background:#575757"></div>
<svg style="left:1848px;top:756px" width="9" height="6"><path d="M0.5 0.5L4.5 4.5L8.5 0.5" fill="none" stroke="#5f5f5f" stroke-width="1"/></svg>
<div class="a" style="left:1563px;top:775px;width:356px;height:2px;background:#454545"></div>
<!-- lock row -->
<div class="t" style="left:1571px;top:785px;font-size:14px;color:#9a9a9a">锁定:</div>
<svg style="left:1615px;top:784px" width="135" height="22" fill="#9c9c9c">
<rect x="3" y="3.5" width="14" height="13.5"/><path d="M6.5 3.5H10V7H6.5ZM13.5 3.5H17V7H13.5ZM3 7H6.5V10.5H3ZM10 7H13.5V10.5H10ZM6.5 10.5H10V14H6.5ZM13.5 10.5H17V14H13.5ZM3 14H6.5V17H3ZM10 14H13.5V17H10Z" fill="#535353"/>
<path d="M45.5 2.5Q47 2.5 46 4L39.5 13L37.5 11.5L44 3.2Q44.7 2.5 45.5 2.5Z"/><path d="M37 12L39 13.8Q38.5 17.5 34.5 18.5Q32 19 30 18.5Q32 17 32.5 15Q33.5 11.5 37 12Z"/>
<path d="M64 2L67 5.2H65V9.3H69V7.3L72 10.3L69 13.3V11.3H65V15.4H67L64 18.6L61 15.4H63V11.3H59V13.3L56 10.3L59 7.3V9.3H63V5.2H61Z"/>
<path d="M86 3.5V15.5H101M84 6.5H95L99 10V17.5" fill="none" stroke="#9c9c9c" stroke-width="1.4"/><circle cx="100" cy="4" r="0.9"/><circle cx="86" cy="18" r="0.9"/><circle cx="99" cy="18.5" r="0.9"/>
<path d="M115.5 9V6.5Q115.5 2.5 120 2.5Q124.5 2.5 124.5 6.5V9" fill="none" stroke="#9c9c9c" stroke-width="1.8"/><rect x="114" y="9" width="12" height="9.5" rx="1"/><circle cx="120" cy="13.5" r="1.3" fill="#535353"/>
</svg>
<div class="t" style="left:1753px;top:785px;font-size:14px;color:#9a9a9a">填充:</div>
<div class="a" style="left:1795px;top:783px;width:66px;height:21px;background:#4e4e4e;border:1px solid #575757"></div>
<div class="a" style="left:1796px;top:784px;width:43px;height:19px;background:#494949"></div>
<div class="a" style="left:1842px;top:784px;width:1px;height:19px;background:#575757"></div>
<svg style="left:1848px;top:792px" width="9" height="6"><path d="M0.5 0.5L4.5 4.5L8.5 0.5" fill="none" stroke="#5f5f5f" stroke-width="1"/></svg>
<div class="a" style="left:1563px;top:814px;width:356px;height:1px;background:#4a4a4a"></div>
<!-- footer -->
<div class="a" style="left:1563px;top:994px;width:356px;height:1px;background:#3a3a3a"></div>
<svg style="left:1660px;top:1000px" width="230" height="22" fill="#9c9c9c">
<path d="M11 8H8.5Q6 8 6 11.3Q6 14.5 8.5 14.5H11M15 8H17.5Q20 8 20 11.3Q20 14.5 17.5 14.5H15M9.5 11.3H16.5" fill="none" stroke="#9c9c9c" stroke-width="1.5"/>
<text x="40" y="17" font-family="Liberation Serif" font-style="italic" font-size="17">fx</text>
<rect x="74" y="5.3" width="16" height="11.3"/><circle cx="82" cy="11" r="3.3" fill="#535353"/>
<circle cx="115.5" cy="10.5" r="6.3" fill="none" stroke="#9c9c9c" stroke-width="1.3"/><path d="M120 6A6.3 6.3 0 0 1 111 15Z"/>
<path d="M142 5.5H148L149 6.5H157V17H142Z"/>
<rect x="176" y="4.5" width="13" height="13" fill="none" stroke="#9c9c9c" stroke-width="1.3"/><path d="M182.5 7.5V14.5M179 11H186" stroke="#9c9c9c" stroke-width="1.5"/>
<path d="M210 5.5H222.5M213.5 5.5V4H219V5.5M211.5 7V17.5H221V7M214 8.5V16M216.3 8.5V16M218.6 8.5V16" fill="none" stroke="#9c9c9c" stroke-width="1.2"/>
</svg>
<div class="a" style="left:1563px;top:1026px;width:356px;height:3px;background:#3a3a3a"></div>

<svg style="left:1900px;top:76px" width="16" height="14"><path d="M4 4L7 6.5L4 9M8 4L11 6.5L8 9" fill="none" stroke="#e6e6e6" stroke-width="1.4"/></svg>

<!-- SPINNER -->
<div class="a" style="left:1233px;top:118px;width:50px;height:50px;border-radius:50%;background:#621c1e;box-shadow:0 0 3px 1px rgba(0,0,0,0.3)"></div>
<svg style="left:1233px;top:118px" width="50" height="50">
<circle cx="22" cy="18.7" r="2.9" fill="#b09a9a"/><circle cx="30" cy="18.7" r="2.9" fill="#8a7272"/>
<circle cx="17.9" cy="25.3" r="2.9" fill="#d0bcbc"/><circle cx="34.1" cy="25.3" r="2.9" fill="#6e4a4a"/>
<circle cx="22" cy="32" r="2.9" fill="#f0e0e0"/><circle cx="30" cy="32" r="2.9" fill="#1a0606"/>
</svg>

<!-- GEOGRAPHIC IMAGER PANEL -->
<div class="a" style="left:1511px;top:189px;width:2px;height:447px;background:#3c3c3c"></div>
<div class="a" style="left:1075px;top:189px;width:436px;height:447px;background:#2e2e2e"></div>
<div class="a" style="left:1077px;top:190px;width:434px;height:39px;background:#434343"></div>
<div class="a" style="left:1077px;top:195px;width:138px;height:34px;background:#535353"></div>
<div class="a" style="left:1077px;top:229px;width:434px;height:396px;background:#535353"></div>
<div class="t" style="left:1088px;top:205px;font-size:13.5px;color:#f0f0f0">Geographic Imager</div>
<svg style="left:1466px;top:204px" width="42" height="16"><path d="M2.5 3.5L7 8L2.5 12.5M7.5 3.5L12 8L7.5 12.5" fill="none" stroke="#cfcfcf" stroke-width="1"/><path d="M21.5 1.5V15" stroke="#cfcfcf" stroke-width="1"/><path d="M29 4H39M29 6.3H39M29 8.6H39M29 10.9H39" stroke="#cfcfcf" stroke-width="1"/></svg>
<!-- GI icons -->
<svg style="left:1080px;top:238px" width="420" height="36" fill="#a2a2a2" stroke="#a2a2a2">
<g fill="none" stroke-width="1"><circle cx="17" cy="14" r="4.5"/><path d="M17 7.5V11M17 17V20.5M10.5 14H14M20 14H23.5"/><circle cx="30.5" cy="23" r="4.5"/><path d="M30.5 16.5V20M30.5 26V29.5M24 23H27.5M33.5 23H37"/></g>
<circle cx="17" cy="14" r="0.8" stroke="none"/><circle cx="30.5" cy="23" r="0.8" stroke="none"/>
<!-- globe arrow -->
<circle cx="59" cy="19.5" r="10.5" stroke="none"/>
<path d="M52 13Q55 10 58 12Q57 15 60 16Q62 19 59 21Q58 25 56 27Q53 22 53 19Q50 17 52 13ZM62 23Q66 22 67 25Q64 28 61 28Z" fill="#535353" stroke="none"/>
<path d="M64 7H74V18H69" fill="none" stroke-width="1.5"/><path d="M63 17L72 8M67.5 7.8H72.5V12.8" fill="none" stroke-width="1.8"/>
<!-- grid 3x3 -->
<g fill="none" stroke-width="1.6"><rect x="84.2" y="7.2" width="26.6" height="23.8"/><path d="M93.5 7.2V31M102 7.2V31M84.2 15.2H110.8M84.2 23.2H110.8"/></g>
<!-- grid 2x2 -->
<g fill="none" stroke-width="1.6"><rect x="121" y="7" width="11.5" height="10.5"/><rect x="136.3" y="7" width="11.5" height="10.5"/><rect x="121" y="20.5" width="11.5" height="10.5"/><rect x="136.3" y="20.5" width="11.5" height="10.5"/></g>
<!-- globe crop -->
<circle cx="166.3" cy="19.7" r="10.8" stroke="none"/>
<path d="M166.5 9Q171 9.5 174 12V26Q171 29.5 166 30.5Q169 27 167.5 24Q164 22 166 19Q168 16 165 14Q163 12 166.5 9Z" fill="#535353" stroke="none"/>
<path d="M163 11Q166 12 165.5 15Q162 17 161 14Z" fill="#535353" stroke="none"/>
<rect x="169" y="4" width="16" height="19" fill="#535353" stroke="none"/>
<path d="M175 4.5V17.8H186.5M169.5 10.1H181V23" fill="none" stroke-width="2.2"/>
<path d="M164 30Q172 29 175 23" fill="none" stroke-width="1.2"/>
<!-- mountain -->
<defs><linearGradient id="mtg" x1="0" y1="0" x2="0" y2="1"><stop offset="0" stop-color="#959595"/><stop offset="1" stop-color="#666"/></linearGradient></defs>
<path d="M194.2 30.5L201.5 12.6L204.6 17.2L209 6.3L214.2 19.7L215.6 14.7L221.7 30.5Z" fill="url(#mtg)" stroke="#a2a2a2" stroke-width="1.3" stroke-linejoin="round"/>
<!-- table -->
<g fill="none" stroke-width="1.5"><rect x="231.5" y="5.5" width="27" height="25"/></g>
<path d="M235 13.5H238M240 13.5H242M244 13.5H255M235 17.3H238M240 17.3H242M244 17.3H255M235 21H238M240 21H242M244 21H255M235 25H238M240 25H242M244 25H255" stroke-width="1.3"/>
<rect x="234" y="8" width="21" height="2.5" stroke="none"/>
<!-- house grid -->
<g fill="none" stroke-width="1.5"><path d="M268.5 17V31H296V17H285.5M268.5 17H278M268.5 24H296M277.5 17V31M286 17V31"/></g>
<path d="M282 5.5L287 11.5H284.5V18H279.5V11.5H277Z" stroke="none"/>
<!-- T dots plus -->
<path d="M306.5 13V11H316.5V13M311.5 11V22M309 22H314" fill="none" stroke-width="1.5"/>
<rect x="317.2" y="19.1" width="4" height="4" stroke="none"/><rect x="322.2" y="23.9" width="4" height="4" stroke="none"/><rect x="315.9" y="26.8" width="4" height="4" stroke="none"/>
<rect x="324.8" y="9" width="10" height="10" fill="none" stroke-width="1.6"/><path d="M329.8 11.5V16.5M327.3 14H332.3" stroke-width="1.6"/>
<path d="M335 27V32H330Z" stroke="none"/>
<!-- T dots arrow -->
<path d="M343.5 13V11H353.5V13M348.5 11V22M346 22H351" fill="none" stroke-width="1.5"/>
<rect x="354" y="19.1" width="4" height="4" stroke="none"/><rect x="359.2" y="23.9" width="4" height="4" stroke="none"/><rect x="353" y="26.8" width="4" height="4" stroke="none"/>
<path d="M365.5 7L371 13H368V19H363V13H360Z" stroke="none"/><path d="M361 19V21.5H370.5V19" fill="none" stroke-width="1.3"/>
<path d="M372 27V32H367Z" stroke="none"/>
</svg>
<svg style="left:1460px;top:243px" width="28" height="28">
<rect x="7.5" y="1" width="18" height="18" fill="none" stroke="#d8d8d8" stroke-width="1.2"/>
<rect x="4.3" y="4" width="18" height="18" fill="#535353" stroke="#d8d8d8" stroke-width="1.2"/>
<rect x="1" y="7.3" width="18" height="18" fill="#535353" stroke="#e4e4e4" stroke-width="1.5"/>
<path d="M10 11V21.5M4.8 16.3H15.3" stroke="#e8e8e8" stroke-width="2.2"/>
</svg>
<div class="a" style="left:1083px;top:284px;width:423px;height:1px;background:#3a3a3a"></div>
<div class="a" style="left:1083px;top:285px;width:423px;height:1px;background:#6a6a6a"></div>
<div class="t" style="left:1089px;top:299px;font-size:13.5px;color:#d2d2d2">参考文件:</div>
<div class="t" style="left:1089px;top:322px;font-size:13.5px;color:#d2d2d2">坐标系统:</div>
<div class="t" style="left:1089px;top:345px;font-size:13.5px;color:#d2d2d2">模式:</div>
<div class="t" style="left:1089px;top:368px;font-size:13.5px;color:#d2d2d2">影像模式:</div>
<div class="t" style="left:1216px;top:345px;font-size:13.5px;color:#d2d2d2">没有打开的文档</div>
<div class="t" style="left:1216px;top:368px;font-size:13.5px;color:#d2d2d2">不适用</div>
<div class="t" style="left:1388px;top:368px;font-size:13.5px;color:#d2d2d2">角度:</div>
<div class="t" style="left:1434px;top:368px;font-size:13.5px;color:#d2d2d2">不适用</div>
<div class="a" style="left:1083px;top:394px;width:423px;height:1px;background:#3a3a3a"></div>
<div class="a" style="left:1083px;top:395px;width:423px;height:1px;background:#6a6a6a"></div>
<div class="t" style="left:1162px;top:412px;font-size:13.5px;color:#e5914a;text-decoration:underline">通用</div>
<div class="t" style="left:1222px;top:412px;font-size:13.5px;color:#e5914a">四角</div>
<div class="t" style="left:1281px;top:413px;font-size:14px;color:#e5914a;letter-spacing:-0.6px">DEM</div>
<div class="t" style="left:1340px;top:412px;font-size:13.5px;color:#e5914a">量测</div>
<div class="t" style="left:1399px;top:412px;font-size:13.5px;color:#e5914a">标尺</div>
<div class="t" style="left:1087px;top:440px;font-size:13.5px;color:#d2d2d2">大地格式:</div>
<div class="t" style="left:1087px;top:463px;font-size:13.5px;color:#d2d2d2">像素大小:</div>
<svg style="left:1485px;top:546px" width="22" height="22"><path d="M7 1.5H15L19.5 6V17H7Z" fill="#535353" stroke="#a8a8a8" stroke-width="1.1"/><path d="M1.5 5.5H11L13.5 8V19.5H1.5Z" fill="#a8a8a8"/><path d="M3.5 11H11.5M3.5 13.5H11.5M3.5 16H11.5" stroke="#535353" stroke-width="1"/></svg>
<div class="a" style="left:1077px;top:624px;width:434px;height:1px;background:#3a3a3a"></div>
<div class="a" style="left:1077px;top:625px;width:434px;height:9px;background:#535353"></div>
<svg style="left:1280px;top:627px" width="26" height="5"><path d="M0 2.5H26" stroke="#3a3a3a" stroke-width="3" stroke-dasharray="1 1.2"/></svg>

<!-- PROGRESS DIALOG -->
<div class="a" style="left:726px;top:483px;width:594px;height:102px;background:#535353;box-shadow:0 2px 10px 3px rgba(0,0,0,0.35)"></div>
<div class="a" style="left:726px;top:483px;width:594px;height:37px;background:#fff"></div>
<div class="t" style="left:735px;top:494px;font-size:14px;color:#111">进度</div>
<div class="t" style="left:737px;top:535px;font-size:14px;color:#d4d4d4;letter-spacing:-0.17px">导入文件'csxm_1_transparent_mosaic_group1'...</div>
<div class="a" style="left:737px;top:561px;width:393px;height:11px;background:#515151;border-radius:6px"></div>
<div class="a" style="left:737px;top:561px;width:246px;height:11px;background:#46a0f0;border-radius:6px"></div>
<div class="t" style="left:1143px;top:559px;font-size:14px;color:#ececec">62%</div>
<div class="a" style="left:1182px;top:539px;width:125px;height:33px;border:2.3px solid #fff;border-radius:17px"></div>
<div class="t" style="left:1230px;top:547px;font-size:14.5px;color:#fff;font-weight:bold">停止</div>

<!-- TASKBAR -->
<div class="a" id="taskbar" style="left:0;top:1030px;width:1920px;height:50px;background:#243038"></div>
<!-- windows logo -->
<svg style="left:19px;top:1044px" width="23" height="22"><path d="M1 3.2L9 2V10H1ZM10.3 1.8L21.5 0.3V10H10.3ZM1 11.3H9V19.3L1 18.2ZM10.3 11.3H21.5V21L10.3 19.5Z" fill="#fff"/></svg>
<!-- store -->
<svg style="left:78px;top:1040px" width="31" height="31"><path d="M5.5 6V4.5Q5.5 1 9 1H21Q24.5 1 24.5 4.5V6" fill="none" stroke="#d8d8d8" stroke-width="2"/><path d="M1 6H30V30H1Z" fill="#f2f2f2"/><rect x="9.5" y="13.5" width="5.5" height="5.5" fill="#f35325"/><rect x="16" y="13.5" width="5.5" height="5.5" fill="#81bc06"/><rect x="9.5" y="20" width="5.5" height="5.5" fill="#05a6f0"/><rect x="16" y="20" width="5.5" height="5.5" fill="#ffba08"/></svg>
<!-- edge -->
<svg style="left:140px;top:1039px" width="33" height="33">
<defs><linearGradient id="eg1" x1="0" y1="0" x2="1" y2="0.7"><stop offset="0" stop-color="#2fb4f2"/><stop offset="0.55" stop-color="#38c8b0"/><stop offset="1" stop-color="#6ade55"/></linearGradient><linearGradient id="eg2" x1="0" y1="0" x2="0.3" y2="1"><stop offset="0" stop-color="#1e9ee6"/><stop offset="1" stop-color="#1059b0"/></linearGradient></defs>
<circle cx="16" cy="16.3" r="15.3" fill="url(#eg1)"/>
<path d="M2.2 11.8Q6.5 7.8 12 8.6Q17.5 9.6 19.5 13.5L19.5 20Q24 22.5 29.6 23.2A15.3 15.3 0 0 1 0.7 16.3Q0.9 13.8 2.2 11.8Z" fill="url(#eg2)"/>
<path d="M9.5 16.5Q11 12.8 15 13.2L17 19.5Q13.5 20.5 13 24Q13.5 28.8 21.5 30.6Q10.5 32 7.3 24Q6.3 19.8 9.5 16.5Z" fill="#0d4f9e" opacity="0.85"/>
<path d="M19.5 20Q24 22.5 29.6 23.2Q28 27 24.5 29.2Q21 27.5 19 24Z" fill="#1566c0" opacity="0.6"/>
<circle cx="16.3" cy="15.6" r="3.3" fill="#1b3247"/>
</svg>
<div class="a" style="left:131px;top:1077px;width:51px;height:3px;background:#76b9ed"></div>
<!-- explorer -->
<svg style="left:203px;top:1042px" width="30" height="25"><path d="M1 1H11L13 3.5H28V23.5H1Z" fill="#ffd55c"/><path d="M1 1H11L13 3.5H28V4.5H12.5L11 6H1Z" fill="#e3a50f"/><path d="M6 24V15Q6 13 8 13H22Q24 13 24 15V24H19.5V17H10.5V24Z" fill="#4c9ddb"/><rect x="10.5" y="17.5" width="9" height="4.5" fill="#ffd55c"/></svg>
<div class="a" style="left:193px;top:1077px;width:41px;height:3px;background:#76b9ed"></div>
<div class="a" style="left:234px;top:1077px;width:10px;height:3px;background:#5d8fb6"></div>
<!-- globe search -->
<svg style="left:265px;top:1040px" width="30" height="31">
<defs><radialGradient id="gs" cx="0.4" cy="0.4" r="0.6"><stop offset="0" stop-color="#5bc0ff"/><stop offset="0.6" stop-color="#1a6fb5"/><stop offset="1" stop-color="#0a2a55"/></radialGradient></defs>
<circle cx="14.5" cy="14.5" r="14" fill="url(#gs)"/><path d="M18 6Q24 8 25 14Q21 16 19 12Z M6 18Q10 20 12 26Q7 24 6 18Z" fill="#4caf50"/>
<circle cx="13" cy="12" r="6.5" fill="#bfe6ff" stroke="#e0e0e0" stroke-width="1.6" opacity="0.9"/><path d="M18 17L27 27" stroke="#d9883a" stroke-width="3" stroke-linecap="round"/>
</svg>
<!-- globe 2 -->
<svg style="left:327px;top:1040px" width="31" height="31">
<defs><linearGradient id="g2" x1="0" y1="0" x2="1" y2="1"><stop offset="0" stop-color="#5aa8e8"/><stop offset="1" stop-color="#0e3f8a"/></linearGradient></defs>
<circle cx="15.5" cy="15.5" r="14.5" fill="url(#g2)" stroke="#d8ecff" stroke-width="1"/>
<circle cx="13" cy="17" r="9.3" fill="#fff"/>
<circle cx="13" cy="17" r="8" fill="#34466a"/><path d="M7 13Q11 10.5 15 13Q17 15 14 17Q11 19 9 17Z" fill="#7a8070"/><path d="M12 20Q16 19 18 22Q15 25 12 23Z" fill="#56607a"/>
<circle cx="24.5" cy="11" r="2.6" fill="#fff"/>
</svg>
<!-- hex blue -->
<svg style="left:390px;top:1040px" width="28" height="31"><path d="M14 0.5L27 8V23L14 30.5L1 23V8Z" fill="#1e78d8"/><circle cx="14" cy="15.5" r="8" fill="none" stroke="#fff" stroke-width="2.5"/><path d="M11 9Q15 12 13 15Q10 16 12 20Q16 19 18 22" fill="none" stroke="#fff" stroke-width="2.2"/></svg>
<!-- green play w/ monster -->
<svg style="left:450px;top:1040px" width="34" height="30"><circle cx="15.5" cy="10.5" r="8.5" fill="#e6b45a" stroke="#b89a70" stroke-width="1.5" stroke-dasharray="1 1"/><path d="M7 10L10 7.5L13 10.5L16 7.5L19 10.5L22 7.5L25 10L22 13L19 10.8L16 13.5L13 10.8L10 13.5Z" fill="#fff" stroke="#c83a2a" stroke-width="1.2"/><path d="M5 11.5L18.5 19L5 27.8Z" fill="#5ca82a"/></svg>
<!-- Pr -->
<div class="a" style="left:514px;top:1040px;width:28px;height:27px;background:#2a0a3a;border:1.6px solid #e37dff"></div>
<div class="t" style="left:518px;top:1045px;font-size:15px;font-weight:bold;color:#e37dff">Pr</div>
<!-- Ps active -->
<div class="a" style="left:560px;top:1030px;width:39px;height:50px;background:#5e9a60"></div>
<div class="a" style="left:599px;top:1030px;width:22px;height:50px;background:#5b656b"></div>
<div class="a" style="left:560px;top:1077px;width:61px;height:3px;background:#4ee04e"></div>
<div class="a" style="left:576px;top:1041px;width:28px;height:26px;background:#001e36;border-radius:5px"></div>
<div class="t" style="left:580px;top:1045px;font-size:16px;font-weight:bold;color:#31a8ff">Ps</div>
<!-- bilibili -->
<div class="a" style="left:637px;top:1040px;width:30px;height:30px;background:#f0709f;border-radius:6px"></div>
<div class="a" style="left:640px;top:1042px;width:9px;height:5px;background:#fff;border-radius:2px"></div>
<div class="t" style="left:640px;top:1050px;font-size:10.5px;color:#fff;letter-spacing:-0.6px">bilibili</div>
<div class="a" style="left:627px;top:1077px;width:51px;height:3px;background:#76b9ed"></div>
<!-- photo circle -->
<svg style="left:699px;top:1040px" width="30" height="30"><defs><clipPath id="pc"><circle cx="15" cy="15" r="14.5"/></clipPath></defs><g clip-path="url(#pc)"><rect width="30" height="30" fill="#bdb6ae"/><rect y="0" width="30" height="9" fill="#e6e6e6"/><rect y="12" width="30" height="4" fill="#3a3030"/><rect y="16" width="30" height="3" fill="#a04848"/></g></svg>
<div class="a" style="left:689px;top:1077px;width:51px;height:3px;background:#76b9ed"></div>
<!-- record -->
<svg style="left:761px;top:1041px" width="29" height="28"><circle cx="14.5" cy="14" r="13.2" fill="#000" stroke="#fff" stroke-width="1.5"/><circle cx="14.5" cy="14" r="8" fill="#e52222"/></svg>
<div class="a" style="left:751px;top:1077px;width:51px;height:3px;background:#76b9ed"></div>
<!-- window app -->
<svg style="left:823px;top:1042px" width="29" height="24"><rect x="0.5" y="0.5" width="28" height="23" fill="#ededed" stroke="#c8c8c8"/><defs><linearGradient id="wg" x1="0" y1="0" x2="1" y2="1"><stop offset="0" stop-color="#3a7a9a"/><stop offset="1" stop-color="#5aaa6a"/></linearGradient></defs><rect x="2.5" y="4" width="13" height="17" fill="url(#wg)"/><path d="M18 6H26M18 9H26M18 12H26M18 15H26M18 18H26" stroke="#b0b0b0" stroke-width="1"/><rect x="24" y="5" width="2" height="7" fill="#3a7a9a"/></svg>
<div class="a" style="left:813px;top:1077px;width:51px;height:3px;background:#76b9ed"></div>
<!-- tray -->
<svg style="left:1559px;top:1050px" width="18" height="10"><path d="M1 9L9 1.5L17 9" fill="none" stroke="#fff" stroke-width="1.1"/></svg>
<svg style="left:1589px;top:1045px" width="16" height="21"><ellipse cx="8" cy="8" rx="5.5" ry="7" fill="#111"/><ellipse cx="8" cy="14" rx="6.5" ry="6" fill="#111"/><ellipse cx="8" cy="14.5" rx="4.5" ry="4.5" fill="#fff"/><path d="M2 10Q8 13 14 10L13 13Q8 14 3 13Z" fill="#d0202a"/><path d="M5 13L7 17L4 17Z" fill="#d0202a"/><ellipse cx="8" cy="8.5" rx="2.5" ry="1.3" fill="#f0a020"/><path d="M3 19.5H7M9 19.5H13" stroke="#f0a020" stroke-width="1.5"/><circle cx="6.5" cy="5" r="1" fill="#fff"/><circle cx="9.5" cy="5" r="1" fill="#fff"/></svg>
<svg style="left:1617px;top:1047px" width="24" height="17"><path d="M2 1V4M5 1V4M1 4H6V7Q6 9 3.5 9Q1 9 1 7ZM3.5 9V15" fill="none" stroke="#fff" stroke-width="1.1"/><rect x="4.5" y="3.5" width="15.5" height="11" fill="#fff" stroke="#fff" stroke-width="1.2"/><rect x="6" y="5" width="12.5" height="8" fill="#fff"/><rect x="20.5" y="7" width="1.5" height="4" fill="#fff"/></svg>
<svg style="left:1647px;top:1046px" width="23" height="19"><path d="M1.5 6H5L10 1.5V17L5 13H1.5Z" fill="none" stroke="#fff" stroke-width="1.1"/><path d="M13 7Q15 9.3 13 11.5M16 4.5Q19.5 9.3 16 14M19 2Q24 9.3 19 16.5" fill="none" stroke="#c8cdd0" stroke-width="1"/></svg>
<svg style="left:1680px;top:1047px" width="18" height="17"><path d="M1 16Q1 4 16 1M4.5 16Q4.5 7.5 16 5M8 16Q8 11 16 9" fill="none" stroke="#fff" stroke-width="1.1"/><circle cx="15" cy="15" r="1.3" fill="#fff"/></svg>
<svg style="left:1707px;top:1044px" width="25" height="23"><path d="M1 4L21 1V18L1 19.5Z" fill="none" stroke="#fff" stroke-width="1.1"/><path d="M8 10Q9 7 13 7.5L14.5 8.5M14 12Q13 14.5 9 14L7.5 13" fill="none" stroke="#fff" stroke-width="1"/><circle cx="16.3" cy="16.2" r="4.6" fill="#f4a01c"/></svg>
<div class="t" style="left:1736px;top:1043px;font-size:19px;color:#fff">中</div>
<div class="t" style="left:1787px;top:1036px;font-size:15px;color:#fff;letter-spacing:0.4px">20:44</div>
<div class="t" style="left:1765px;top:1059px;font-size:15px;color:#fff;letter-spacing:0.8px">2020/11/14</div>
<svg style="left:1868px;top:1045px" width="22" height="21"><path d="M1 1H20V16H14L10.5 19.5L7 16H1Z" fill="none" stroke="#fff" stroke-width="1.1"/></svg>
<div class="a" style="left:1914px;top:1030px;width:1px;height:50px;background:#6f7d86"></div>

</body></html>
